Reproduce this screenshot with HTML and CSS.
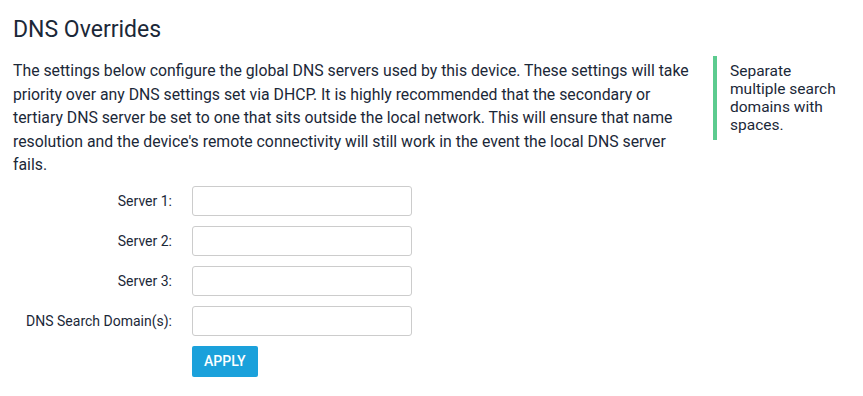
FILE: index.html
```html
<!DOCTYPE html>
<html lang="en">
<head>
  <meta charset="UTF-8">
  <meta name="viewport" content="width=device-width, initial-scale=1.0">
  <title>DNS Overrides</title>
  <link rel="stylesheet" href="styles.css">
</head>
<body>
  <div class="page">
    <div class="main">
      <h1>DNS Overrides</h1>
      <p class="intro">The settings below configure the global DNS servers used by this device. These settings will take priority over any DNS settings set via DHCP. It is highly recommended that the secondary or tertiary DNS server be set to one that sits outside the local network. This will ensure that name resolution and the device's remote connectivity will still work in the event the local DNS server fails.</p>

      <form class="dns-form">
        <div class="form-row">
          <label for="server1">Server 1:</label>
          <input type="text" id="server1">
        </div>
        <div class="form-row">
          <label for="server2">Server 2:</label>
          <input type="text" id="server2">
        </div>
        <div class="form-row">
          <label for="server3">Server 3:</label>
          <input type="text" id="server3">
        </div>
        <div class="form-row">
          <label for="search">DNS Search Domain(s):</label>
          <input type="text" id="search">
        </div>
        <div class="form-row">
          <span class="spacer"></span>
          <button type="button" class="apply-btn">APPLY</button>
        </div>
      </form>
    </div>

    <aside class="hint">Separate multiple search domains with spaces.</aside>
  </div>
</body>
</html>
```

FILE: styles.css
```css
body {
  margin: 0;
  font-family: Roboto, "Noto Sans", sans-serif;
  color: #1b2838;
  background-color: #ffffff;
}
.page {
  display: flex;
  padding: 16px 13px;
}
.main {
  width: 690px;
}
h1 {
  font-size: 23px;
  font-weight: 400;
  margin: 0 0 16px;
}
.intro {
  font-size: 15.8px;
  line-height: 23.6px;
  margin: 0 0 9px;
}
.dns-form {
  display: flex;
  flex-direction: column;
  gap: 10px;
}
.form-row {
  display: flex;
  align-items: center;
  gap: 20px;
}
.form-row label,
.spacer {
  width: 159px;
  text-align: right;
  font-size: 14px;
}
.form-row input {
  width: 220px;
  height: 30px;
  box-sizing: border-box;
  border: 1px solid #cccccc;
  border-radius: 3px;
  padding: 4px 8px;
}
.apply-btn {
  background-color: #1ba1db;
  color: #ffffff;
  border: none;
  border-radius: 2px;
  font-family: inherit;
  font-size: 14px;
  font-weight: 500;
  height: 31px;
  padding: 0 12px;
}
.hint {
  margin-left: 10px;
  margin-top: 40px;
  align-self: flex-start;
  border-left: 4px solid #5ccb8f;
  padding: 6px 0 6px 13px;
  width: 112px;
  font-size: 15.5px;
  line-height: 18px;
}
```
